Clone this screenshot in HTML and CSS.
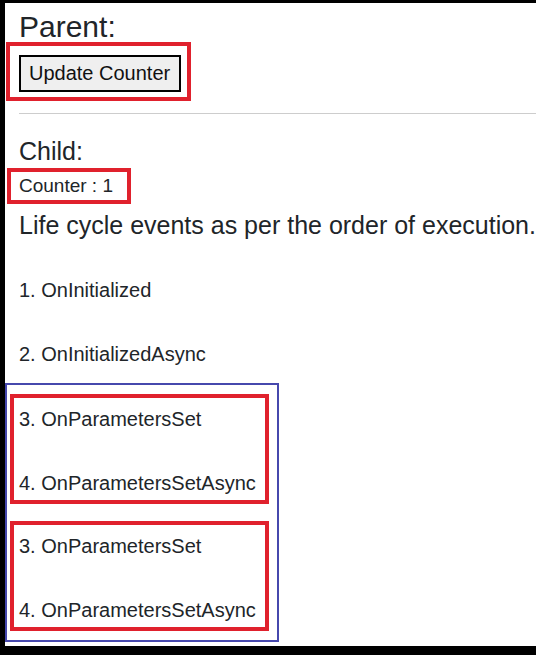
FILE: index.html
```html
<html>
  <head>
    <meta name="viewport" content="width=device-width, initial-scale=1" />
    <link rel="stylesheet" href="styles.css">
  </head>
  <body>
    <div class="screen">
      <div class="parent-title">Parent:</div>
      <div class="mark mark-button">
        <button class="update-btn">Update Counter</button>
      </div>
      <hr class="divider">

      <div class="child-title">Child:</div>
      <div class="mark mark-counter">Counter : 1</div>
      <div class="lifecycle-title">Life cycle events as per the order of execution.</div>

      <div class="events">
        <div class="event">1. OnInitialized</div>
        <div class="event">2. OnInitializedAsync</div>

        <div class="repeat-box">
          <div class="mark mark-events">
            <div class="event">3. OnParametersSet</div>
            <div class="event">4. OnParametersSetAsync</div>
          </div>
          <div class="mark mark-events">
            <div class="event">3. OnParametersSet</div>
            <div class="event">4. OnParametersSetAsync</div>
          </div>
        </div>
      </div>
    </div>
  </body>
</html>
```

FILE: styles.css
```css
body {
	margin: 0;
	background: #000;
	font-family: "Liberation Sans", Arial, sans-serif;
	color: #212529;
	overflow: hidden;
}

.screen {
	box-sizing: border-box;
	margin: 3px 0 0 5px;
	height: 643px;
	padding: 9px 0 0 14px;
	background: #fff;
}

/* annotation frames drawn over the screenshot */
.mark {
	box-sizing: border-box;
	border: 4px solid #e0212d;
}

.parent-title {
	font-size: 30px;
	line-height: 30px;
}

.mark-button {
	width: fit-content;
	margin-left: -13px;
	padding: 9px 6px 5px 9px;
}

.update-btn {
	display: block;
	height: 37px;
	padding: 0 9px 0 8px;
	border: 2px solid #000;
	border-radius: 0;
	background: #efefef;
	color: #111;
	font-family: "Liberation Sans", Arial, sans-serif;
	font-size: 20px;
}

.divider {
	margin: 12px 0 0 0;
	border: 0;
	border-top: 1px solid #cdcdcd;
}

.child-title {
	margin-top: 23px;
	font-size: 25px;
	line-height: 28px;
}

.mark-counter {
	width: fit-content;
	margin: 3px 0 0 -12px;
	padding: 3px 14px 3px 8px;
	font-size: 19px;
	line-height: 22px;
}

.lifecycle-title {
	margin-top: 7px;
	font-size: 25px;
	line-height: 28px;
	white-space: nowrap;
}

.events {
	display: flex;
	flex-direction: column;
	gap: 40px;
	margin-top: 39px;
}

.event {
	font-size: 20px;
	line-height: 24px;
	white-space: nowrap;
}

.repeat-box {
	box-sizing: border-box;
	display: flex;
	flex-direction: column;
	gap: 17px;
	width: 274px;
	margin: -23px 0 0 -14px;
	padding: 9px 0 9px 3px;
	border: 2px solid #4648ad;
}

.mark-events {
	display: flex;
	flex-direction: column;
	gap: 40px;
	width: 259px;
	padding: 9px 9px 5px 5px;
}
```
